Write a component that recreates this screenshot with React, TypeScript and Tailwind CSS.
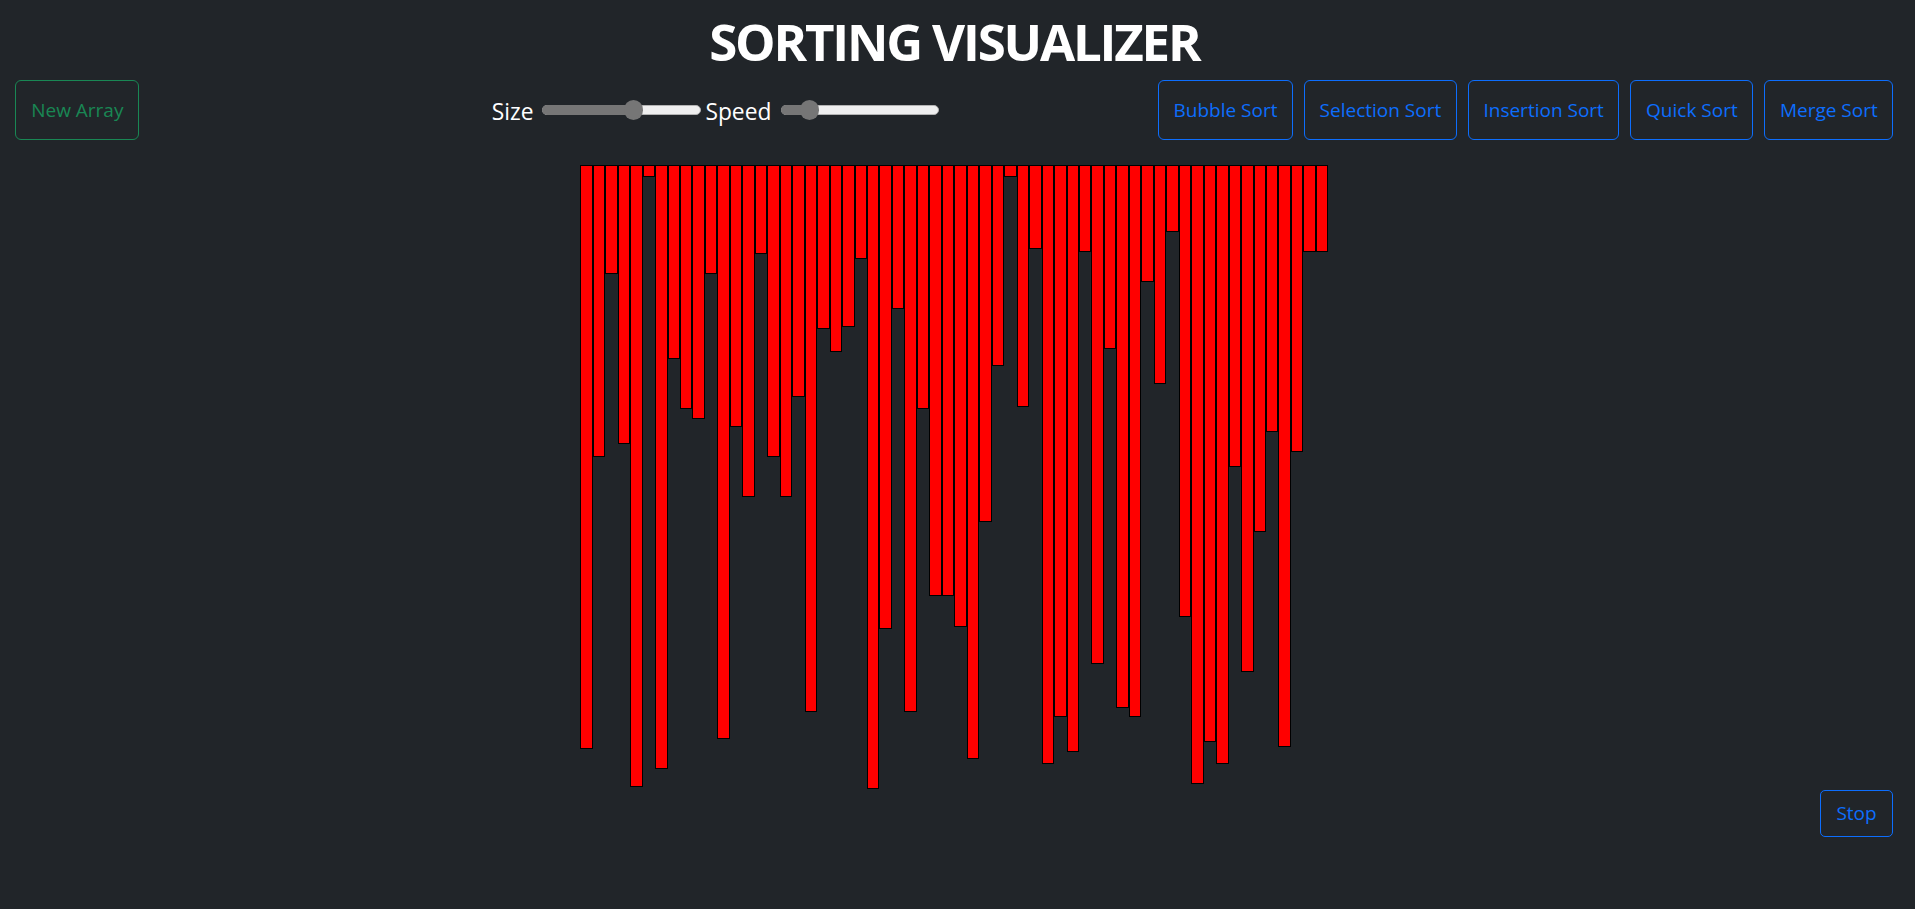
import React from "react";

const heights = [
  583.7, 291.9, 108.6, 279, 621.8, 12.3, 604, 194, 244.2, 253.7,
  108.6, 573.7, 262, 331.6, 89.2, 291.9, 331.6, 231.7, 546.7, 163.7,
  187, 161.7, 93.7, 623.9, 463.9, 143.9, 546.7, 244.2, 431.5, 431.5,
  461.8, 594, 356.9, 201.5, 12.3, 241.7, 84.2, 599, 551.7, 586.6,
  86.7, 498.7, 183.7, 543.4, 551.7, 116.9, 218.9, 66.7, 451.8, 618.9,
  576.6, 599, 301.8, 507, 366.9, 267, 581.6, 286.9, 86.7, 86.7,
];

function Slider({ center }: { center: number }) {
  return (
    <div className="relative h-[19.4px] w-[158.4px] shrink-0">
      <div className="absolute left-0 right-0 top-[5px] h-[9.4px] rounded-full border border-[#b3b3b3] bg-[#efefef]" />
      <div
        className="absolute left-0 top-[5px] h-[9.4px] rounded-full bg-[#767676]"
        style={{ width: center + 4 }}
      />
      <div
        className="absolute top-0 h-[19.4px] w-[19.4px] rounded-full bg-[#767676]"
        style={{ left: center - 9.7 }}
      />
    </div>
  );
}

const sorts = ["Bubble Sort", "Selection Sort", "Insertion Sort", "Quick Sort", "Merge Sort"];

export default function App() {
  return (
    <div className="min-h-screen bg-[#212529] pl-[15.3px] pr-[21.7px] font-['Open_Sans','Noto_Sans',sans-serif]">
      <h1 className="h-[80.3px] pt-[16.4px] text-center text-[51px] font-bold leading-[51px] tracking-[-2.2px] text-white">
        SORTING VISUALIZER
      </h1>

      <div className="flex h-[59.4px] items-center">
        <button className="flex h-full w-[124px] items-center justify-center rounded-[6px] border border-[#198754] text-[19px] text-[#198754]">
          New Array
        </button>

        <div className="ml-[352.4px] flex items-center text-[22.8px] text-white">
          <span className="translate-y-[1.5px]">Size</span>
          <div className="ml-[9px]">
            <Slider center={91} />
          </div>
          <span className="ml-[4.6px] translate-y-[1.5px]">Speed</span>
          <div className="ml-[9.3px]">
            <Slider center={29} />
          </div>
        </div>

        <div className="ml-auto flex h-full gap-[11px]">
          {sorts.map((s) => (
            <button
              key={s}
              className="flex h-full items-center rounded-[6px] border border-[#0d6efd] px-[14.6px] text-[19px] text-[#0d6efd]"
            >
              {s}
            </button>
          ))}
        </div>
      </div>

      <div className="mt-[25.3px] flex h-[625px] items-start justify-center">
        {heights.map((h, i) => (
          <div
            key={i}
            className="w-[12.48px] shrink-0 border border-black bg-[#ff0000]"
            style={{ height: h }}
          />
        ))}
      </div>

      <div className="flex justify-end">
        <button className="flex h-[47px] items-center rounded-[5px] border border-[#0d6efd] px-[15.7px] text-[19px] text-[#0d6efd]">
          Stop
        </button>
      </div>
    </div>
  );
}
